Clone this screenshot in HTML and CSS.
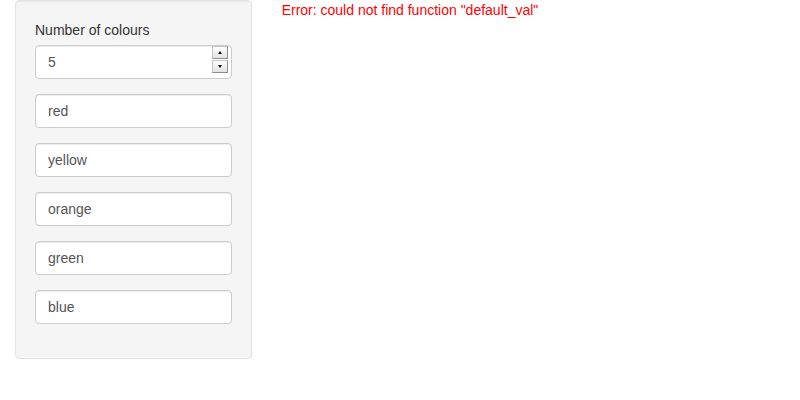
FILE: index.html
```html
<!DOCTYPE html>
<html lang="en">
<head>
    <meta charset="UTF-8">
    <title>Colours</title>
    <link rel="stylesheet" href="styles.css">
</head>
<body>
    <div class="container-fluid">
        <div class="row">
            <div class="col-side">
                <form class="well">
                    <div class="form-group">
                        <label class="control-label" for="n">Number of colours</label>
                        <div class="num-wrap">
                            <input id="n" type="number" class="form-control" value="5">
                            <div class="spin">
                                <span class="spin-btn"><i class="arrow-up"></i></span>
                                <span class="spin-btn"><i class="arrow-down"></i></span>
                            </div>
                        </div>
                    </div>
                    <div class="form-group"><input type="text" class="form-control" value="red"></div>
                    <div class="form-group"><input type="text" class="form-control" value="yellow"></div>
                    <div class="form-group"><input type="text" class="form-control" value="orange"></div>
                    <div class="form-group"><input type="text" class="form-control" value="green"></div>
                    <div class="form-group"><input type="text" class="form-control" value="blue"></div>
                </form>
            </div>
            <div class="col-main">
                <div class="shiny-output-error">Error: could not find function "default_val"</div>
            </div>
        </div>
    </div>
</body>
</html>
```

FILE: styles.css
```css
* {
    box-sizing: border-box;
}
body {
    margin: 0;
    font-family: "Liberation Sans", Arial, sans-serif;
    font-size: 14px;
    line-height: 20px;
    color: #333;
    background: #fff;
}
.container-fluid {
    padding: 0 15px;
}
.row {
    display: flex;
    margin: 0 -15px;
}
.col-side {
    width: 33.3333%;
    padding: 0 15px;
}
.col-main {
    width: 66.6667%;
    padding: 0 15px;
}
.well {
    margin: 0 0 20px;
    padding: 19px;
    background: #f5f5f5;
    border: 1px solid #e3e3e3;
    border-radius: 4px;
    box-shadow: inset 0 1px 1px rgba(0, 0, 0, 0.05);
}
.form-group {
    margin-bottom: 15px;
}
.control-label {
    display: inline-block;
    margin-bottom: 5px;
    font-weight: 400;
}
.form-control {
    display: block;
    width: 100%;
    height: 34px;
    padding: 6px 12px;
    font-family: inherit;
    font-size: 14px;
    line-height: 20px;
    color: #555;
    background: #fff;
    border: 1px solid #ccc;
    border-radius: 4px;
    box-shadow: inset 0 1px 1px rgba(0, 0, 0, 0.075);
    outline: none;
}
.num-wrap {
    position: relative;
}
input[type=number]::-webkit-inner-spin-button,
input[type=number]::-webkit-outer-spin-button {
    -webkit-appearance: none;
    margin: 0;
}
.spin {
    position: absolute;
    top: 1px;
    right: 4px;
    width: 16px;
    display: flex;
    flex-direction: column;
    gap: 1px;
}
.spin-btn {
    display: flex;
    align-items: center;
    justify-content: center;
    height: 13px;
    background: linear-gradient(#fdfdfd, #e2e2e2);
    border: 1px solid #c4c4c4;
    border-right-color: #8e8e8e;
    border-bottom-color: #8e8e8e;
}
.arrow-up,
.arrow-down {
    width: 0;
    height: 0;
    border-left: 2px solid transparent;
    border-right: 2px solid transparent;
}
.arrow-up {
    border-bottom: 3px solid #111;
}
.arrow-down {
    border-top: 3px solid #111;
}
.shiny-output-error {
    color: #ff0000;
}
```
